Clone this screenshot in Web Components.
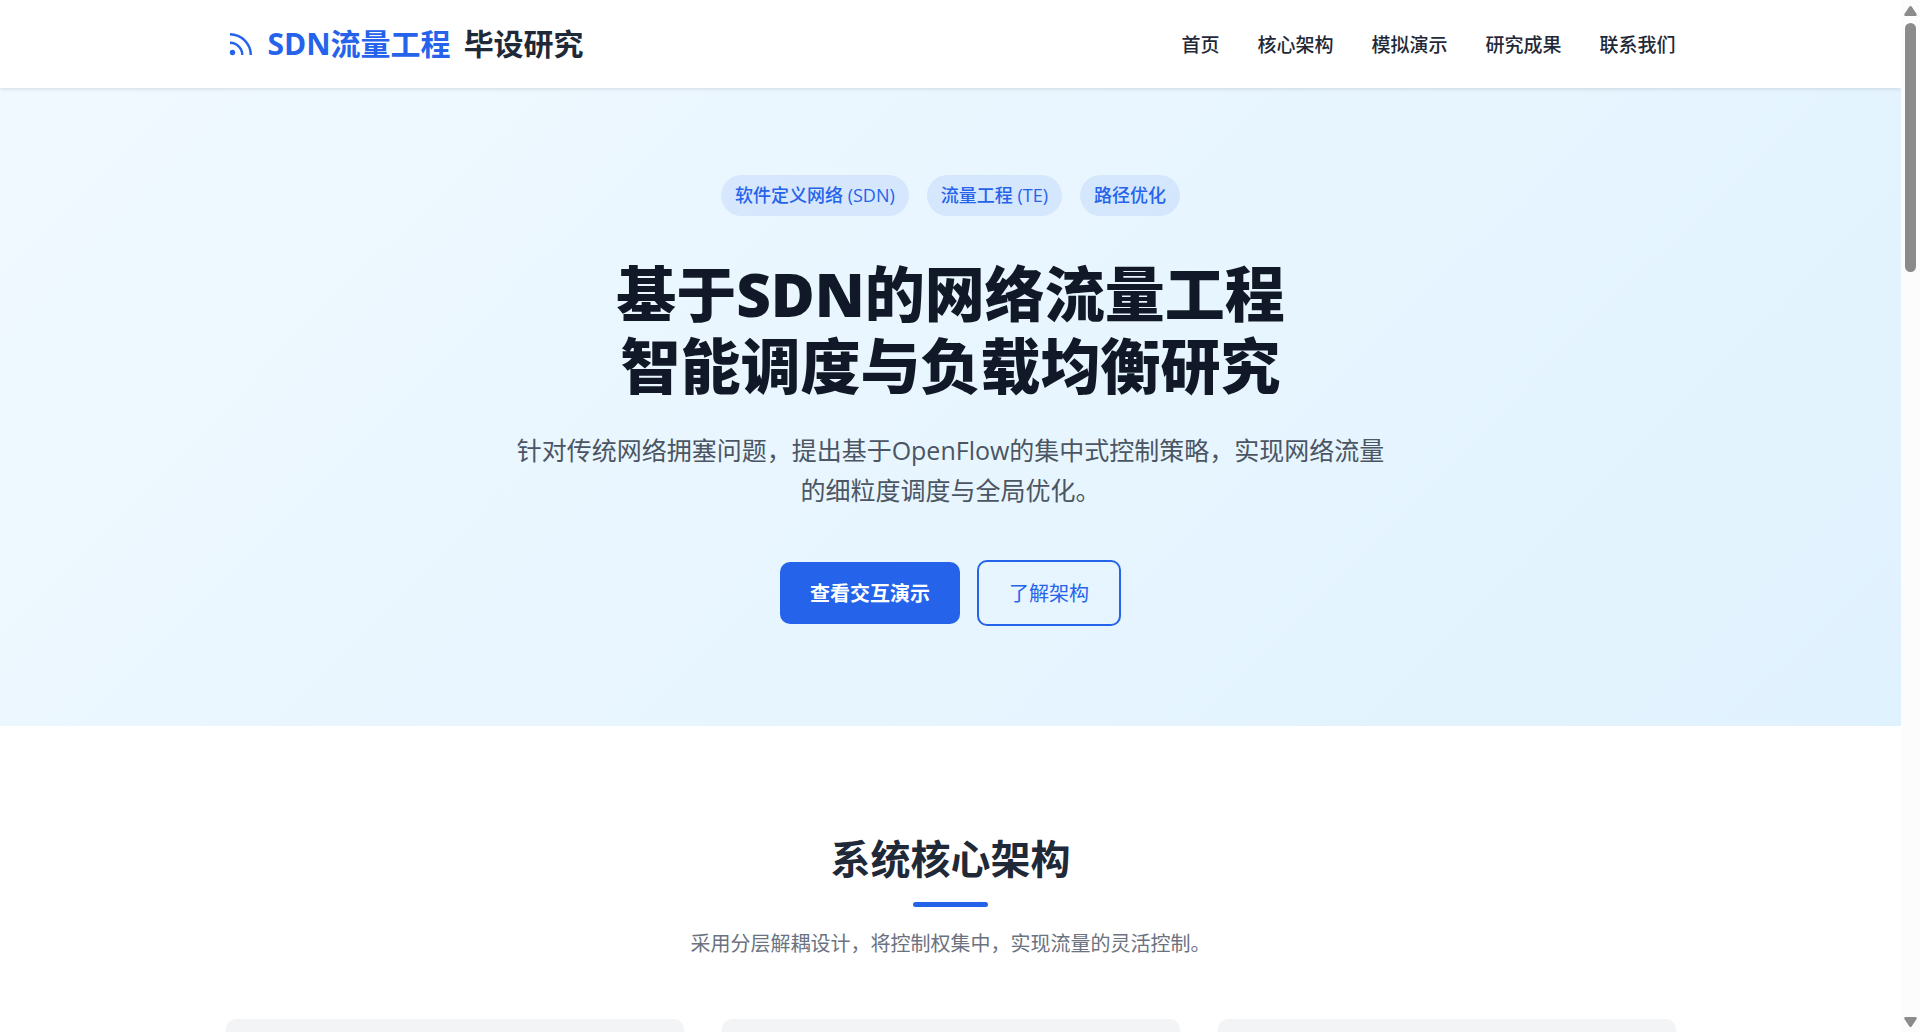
<!DOCTYPE html>
<html lang="zh-CN">
<head>
<meta charset="utf-8">
<title>SDN流量工程 毕设研究</title>
<style>
html, body { margin: 0; height: 100%; overflow: hidden; }
body {
  font-family: "Open Sans", "Noto Sans CJK SC", sans-serif;
  color: #1f2937; background: #fff;
  --primary: #2563eb;
}
</style>
</head>
<body>
<app-shell>
  <site-header>
    <nav-link href="#home">首页</nav-link>
    <nav-link href="#architecture">核心架构</nav-link>
    <nav-link href="#demo">模拟演示</nav-link>
    <nav-link href="#results">研究成果</nav-link>
    <nav-link href="#contact">联系我们</nav-link>
  </site-header>
  <hero-banner>
    <tag-pill slot="tags">软件定义网络 (SDN)</tag-pill>
    <tag-pill slot="tags">流量工程 (TE)</tag-pill>
    <tag-pill slot="tags">路径优化</tag-pill>
    <span slot="title">基于SDN的网络流量工程<br>智能调度与负载均衡研究</span>
    <span slot="text">针对传统网络拥塞问题，提出基于OpenFlow的集中式控制策略，实现网络流量的细粒度调度与全局优化。</span>
    <action-button slot="actions" variant="solid">查看交互演示</action-button>
    <action-button slot="actions" variant="outline">了解架构</action-button>
  </hero-banner>
  <content-section>
    <span slot="title">系统核心架构</span>
    <span slot="text">采用分层解耦设计，将控制权集中，实现流量的灵活控制。</span>
    <feature-card></feature-card>
    <feature-card></feature-card>
    <feature-card></feature-card>
  </content-section>
</app-shell>
<script>
const define = (name, html, setup) => {
  const template = document.createElement('template');
  template.innerHTML = html;
  customElements.define(name, class extends HTMLElement {
    constructor() {
      super();
      this.attachShadow({ mode: 'open' }).append(template.content.cloneNode(true));
    }
    connectedCallback() { if (setup) setup(this, this.shadowRoot); }
  });
};

define('app-shell', `
<style>
:host { display: flex; height: 100vh; overflow: hidden; }
main { flex: 1; min-width: 0; overflow: hidden; }
</style>
<main><slot></slot></main>
<scroll-rail></scroll-rail>`);

define('scroll-rail', `
<style>
:host { display: flex; flex-direction: column; align-items: center; box-sizing: border-box; width: 19px; padding: 6px 0 5px; background: #fcfcfc; }
svg { display: block; width: 13px; height: 10px; fill: #8b8b8b; }
.track { flex: 1; padding: 7px 0 0; }
.thumb { width: 11px; height: 25%; border-radius: 6px; background: #8b8b8b; }
</style>
<svg viewBox="0 0 13 10"><path d="M5.4 .6Q6.5-.6 7.6.6L12.6 8Q13.2 10 11.5 10H1.5Q-.2 10 .4 8Z"/></svg>
<div class="track"><div class="thumb"></div></div>
<svg viewBox="0 0 13 10"><path d="M5.4 9.4Q6.5 10.6 7.6 9.4L12.6 2Q13.2 0 11.5 0H1.5Q-.2 0 .4 2Z"/></svg>`);

define('site-header', `
<style>
:host { display: block; position: relative; z-index: 1; background: rgba(255,255,255,.95); box-shadow: 0 1px 4px rgba(0,0,0,.12); }
.bar { display: flex; align-items: center; justify-content: space-between; box-sizing: border-box; max-width: 1500px; height: 88px; margin: 0 auto; padding: 0 25px; }
a { display: flex; align-items: center; gap: 12px; font-size: 30px; line-height: 44px; font-weight: 700; color: var(--primary); text-decoration: none; }
.name { display: flex; gap: 13px; }
svg { width: 30px; height: 30px; }
.dark { color: #1f2937; }
nav { display: flex; gap: 38px; padding-top: 2px; }
</style>
<div class="bar">
  <a href="#home">
    <svg viewBox="0 0 30 30" fill="none" stroke="currentColor" stroke-width="2.400"><path d="M4 5.200A21 21 0 0 1 24.800 26M4 13.800A12.300 12.300 0 0 1 16.300 26"/><circle cx="6.500" cy="23.500" r="2.700" fill="currentColor" stroke="none"/></svg>
    <span class="name"><span>SDN流量工程</span><span class="dark">毕设研究</span></span>
  </a>
  <nav><slot></slot></nav>
</div>`);

define('nav-link', `
<style>
:host { display: block; }
a { color: #1f2937; font-size: 19px; line-height: 28px; font-weight: 500; text-decoration: none; }
</style>
<a><slot></slot></a>`, (el, root) => { root.querySelector('a').href = el.getAttribute('href'); });

define('hero-banner', `
<style>
:host { display: block; padding: 87px 25px 100px; background: linear-gradient(135deg, #f0f9ff 0%, #e0f2fe 100%); text-align: center; }
.tags { display: flex; justify-content: center; gap: 18px; margin-bottom: 42px; }
h1 { margin: 0 0 28px; font-size: 60px; line-height: 72px; font-weight: 900; color: #111827; }
p { max-width: 875px; margin: 0 auto 50px; font-size: 25px; line-height: 40px; color: #4b5563; }
.actions { display: flex; align-items: center; justify-content: center; gap: 17px; }
</style>
<div class="tags"><slot name="tags"></slot></div>
<h1><slot name="title"></slot></h1>
<p><slot name="text"></slot></p>
<div class="actions"><slot name="actions"></slot></div>`);

define('tag-pill', `
<style>
:host { display: block; padding: 6px 14px; border-radius: 21px; background: rgba(37,99,235,.1); color: var(--primary); font-size: 18px; line-height: 29px; font-weight: 500; }
</style>
<slot></slot>`);

define('action-button', `
<style>
:host { display: block; }
button { display: block; box-sizing: border-box; height: 62px; padding: 0 30px 2px; border: 0; border-radius: 10px; background: var(--primary); color: #fff; font: inherit; font-size: 20px; font-weight: 600; cursor: pointer; }
:host([variant="outline"]) button { height: 66px; border: 2px solid var(--primary); background: transparent; color: var(--primary); font-weight: 400; }
</style>
<button type="button"><slot></slot></button>`);

define('content-section', `
<style>
:host { display: block; padding: 100px 0; background: #fff; }
.inner { box-sizing: border-box; max-width: 1500px; margin: 0 auto; padding: 0 25px; text-align: center; }
h2 { margin: 0; font-size: 40px; line-height: 66px; font-weight: 700; }
.rule { width: 75px; height: 5px; margin: 10px auto 22px; border-radius: 3px; background: var(--primary); }
p { margin: 0 0 60px; font-size: 20px; line-height: 30px; color: #6b7280; }
.cards { display: grid; grid-template-columns: repeat(3, 1fr); gap: 38px; }
</style>
<div class="inner">
  <h2><slot name="title"></slot></h2>
  <div class="rule"></div>
  <p><slot name="text"></slot></p>
  <div class="cards"><slot></slot></div>
</div>`);

define('feature-card', `
<style>
:host { display: block; min-height: 300px; border-radius: 10px; background: #f3f4f6; }
</style>
<slot></slot>`);
</script>
</body>
</html>
